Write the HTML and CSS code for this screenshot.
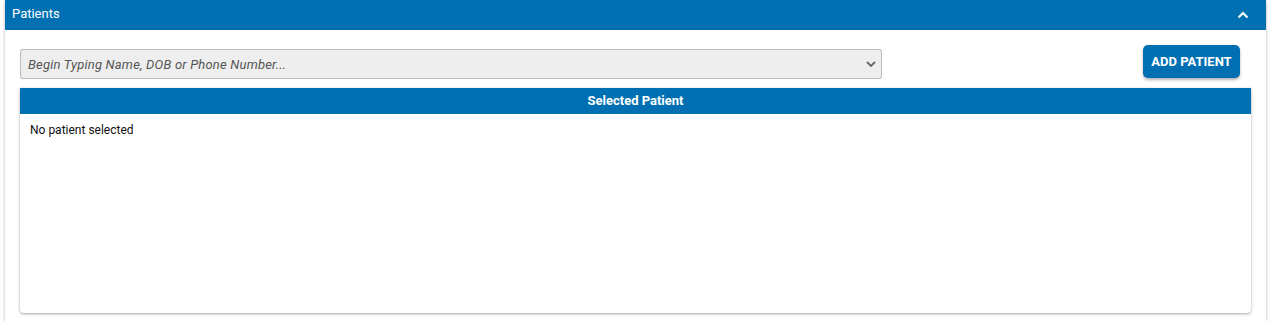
FILE: index.html
```html
<!DOCTYPE html>
<html lang="en">
<head>
    <meta charset="UTF-8">
    <meta name="viewport" content="width=device-width, initial-scale=1.0">
    <title>Patients</title>
    <link rel="stylesheet" href="styles.css">
</head>
<body>
    <section class="panel">
        <header class="panel-head">
            <span class="panel-title">Patients</span>
            <svg class="collapse" width="14" height="14" viewBox="0 0 14 14">
                <path d="M2.5 9.5 L7 5 L11.5 9.5" fill="none" stroke="#fff" stroke-width="2.2"/>
            </svg>
        </header>
        <div class="panel-body">
            <div class="search-row">
                <div class="patient-select">
                    <span class="placeholder">Begin Typing Name, DOB or Phone Number...</span>
                    <svg class="caret" width="12" height="12" viewBox="0 0 12 12">
                        <path d="M2 4 L6 8 L10 4" fill="none" stroke="#666" stroke-width="1.8"/>
                    </svg>
                </div>
                <button type="button" class="add-btn">ADD PATIENT</button>
            </div>
            <div class="selected-card">
                <div class="card-head">Selected Patient</div>
                <div class="card-body">No patient selected</div>
            </div>
        </div>
    </section>
</body>
</html>
```

FILE: styles.css
```css
* {
    box-sizing: border-box;
}

body {
    margin: 0;
    background-color: #fff;
    font-family: Roboto, "Liberation Sans", Arial, sans-serif;
}

.panel {
    margin-left: 5px;
    width: 1261px;
    height: 321px;
    background: #fff;
    box-shadow: 0 1px 3px rgba(0, 0, 0, 0.3);
    display: flex;
    flex-direction: column;
}

.panel-head {
    height: 30px;
    background-color: #0070b2;
    color: #fff;
    display: flex;
    align-items: center;
    justify-content: space-between;
    padding: 0 16px 0 7px;
}

.panel-title {
    font-size: 13px;
    position: relative;
    top: -2px;
}

.collapse {
    display: block;
}

.panel-body {
    padding: 15px 15px 0 15px;
    flex: 1;
    display: flex;
    flex-direction: column;
}

.search-row {
    display: flex;
    justify-content: space-between;
    align-items: center;
    height: 33px;
    margin-bottom: 10px;
    padding-right: 11px;
}

.patient-select {
    width: 862px;
    height: 30px;
    margin-top: 5px;
    background-color: #eee;
    border: 1px solid #bbb;
    border-radius: 2px;
    display: flex;
    align-items: center;
    justify-content: space-between;
    padding: 0 4px 0 7px;
}

.placeholder {
    font-size: 13px;
    font-style: italic;
    letter-spacing: 0.2px;
    color: #555;
}

.caret {
    display: block;
}

.add-btn {
    height: 33px;
    width: 97px;
    border: none;
    border-radius: 5px;
    background-color: #0070b2;
    color: #fff;
    font-family: Roboto, "Liberation Sans", Arial, sans-serif;
    font-weight: bold;
    font-size: 13px;
    padding: 0;
    box-shadow: 0 2px 3px rgba(0, 0, 0, 0.3);
    cursor: pointer;
}

.selected-card {
    width: 1231px;
    height: 225px;
    border-radius: 0 0 4px 4px;
    box-shadow: 0 1px 3px rgba(0, 0, 0, 0.35);
    background: #fff;
}

.card-head {
    height: 26px;
    background-color: #0070b2;
    color: #fff;
    font-weight: bold;
    font-size: 13px;
    text-align: center;
    line-height: 26px;
}

.card-body {
    padding: 9px 10px;
    font-size: 12px;
    color: #111;
}
```
